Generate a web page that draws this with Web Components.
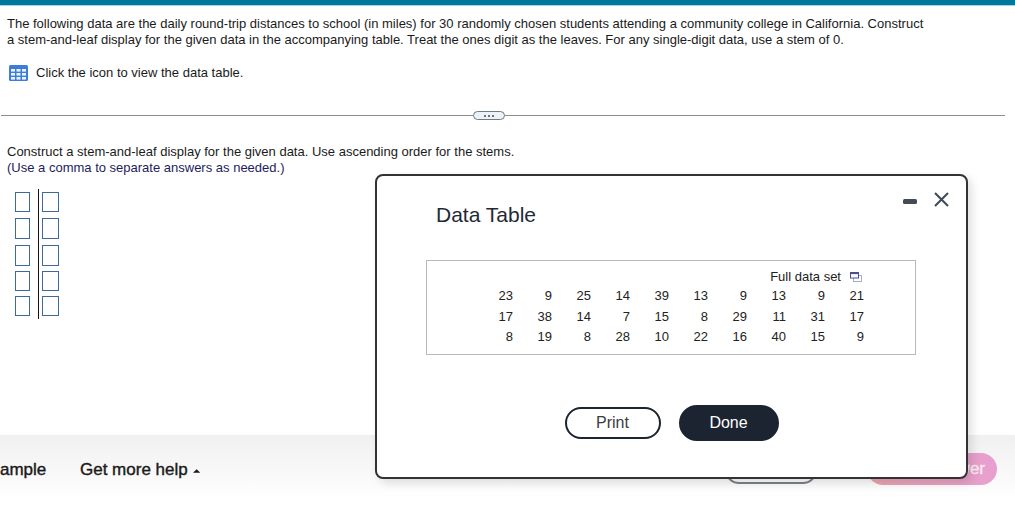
<!DOCTYPE html>
<html>
<head>
<meta charset="utf-8">
<title>Data Table</title>
<style>
  html, body { margin: 0; height: 100%; background: #fff; }
  body { font-family: "Liberation Sans", Arial, sans-serif; color: #1a1a1a; overflow: hidden; }
</style>
</head>
<body>
<hw-page>
  <hw-question></hw-question>
  <hw-divider></hw-divider>
  <hw-answer></hw-answer>
  <hw-footer></hw-footer>
  <hw-modal heading="Data Table">
    <hw-data-table></hw-data-table>
  </hw-modal>
</hw-page>

<script>
class HwPage extends HTMLElement {
  constructor() {
    super();
    this.attachShadow({ mode: "open" }).innerHTML = `
      <style>
        :host { display: flex; flex-direction: column; position: relative; height: 509px; width: 1015px; overflow: hidden; }
        .bar { height: 5px; background: #00789e; border-bottom: 1px solid #a9d4e2; flex: none; }
      </style>
      <div class="bar"></div>
      <slot></slot>`;
  }
}

class HwQuestion extends HTMLElement {
  constructor() {
    super();
    this.attachShadow({ mode: "open" }).innerHTML = `
      <style>
        :host { display: block; padding: 10px 0 0 7px; font-size: 13px; line-height: 16px; color: #1a1a1a; }
        p { margin: 0; width: 980px; }
        .link { display: flex; align-items: flex-start; gap: 8px; margin: 17px 0 0 2px; }
        svg { display: block; flex: none; }
      </style>
      <p>The following data are the daily round-trip distances to school (in miles) for 30 randomly chosen students attending a community college in California. Construct<br>a stem-and-leaf display for the given data in the accompanying table. Treat the ones digit as the leaves. For any single-digit data, use a stem of 0.</p>
      <div class="link">
        <svg width="19" height="16" viewBox="0 0 19 16">
          <rect width="19" height="16" rx="1.5" fill="#3b7dd8"/>
          <g fill="#eaf2fd">
            <rect x="2" y="4" width="4" height="2.6"/><rect x="7.5" y="4" width="4" height="2.6"/><rect x="13" y="4" width="4" height="2.6"/>
            <rect x="2" y="8" width="4" height="2.6"/><rect x="7.5" y="8" width="4" height="2.6"/><rect x="13" y="8" width="4" height="2.6"/>
            <rect x="2" y="12" width="4" height="2.6"/><rect x="7.5" y="12" width="4" height="2.6"/><rect x="13" y="12" width="4" height="2.6"/>
          </g>
        </svg>
        <span>Click the icon to view the data table.</span>
      </div>`;
  }
}

class HwDivider extends HTMLElement {
  constructor() {
    super();
    this.attachShadow({ mode: "open" }).innerHTML = `
      <style>
        :host { display: flex; align-items: center; margin: 30px 10px 0 1px; height: 9px; }
        i { flex: 1; height: 1px; background: #8d8d8d; }
        .more { width: 30px; height: 7px; border: 1px solid #6e7a86; border-radius: 5px; background: #eef2f6; display: flex; align-items: center; justify-content: center; gap: 2px; }
        .more b { width: 2px; height: 2px; background: #3f4a55; border-radius: 50%; }
      </style>
      <i style="flex:none;width:472px"></i>
      <div class="more"><b></b><b></b><b></b></div>
      <i></i>`;
  }
}

class HwAnswer extends HTMLElement {
  constructor() {
    super();
    const rows = [20, 21, 21, 20, 20];
    const gaps = [0, 6, 6, 5, 5];
    const box = (h, g) => `<u style="height:${h}px;margin-top:${g}px"></u>`;
    const col = rows.map((h, i) => box(h, gaps[i])).join("");
    this.attachShadow({ mode: "open" }).innerHTML = `
      <style>
        :host { display: block; padding: 24px 0 0 7px; font-size: 13px; line-height: 16px; }
        p { margin: 0; }
        .hint { color: #1d1d5c; }
        .stem { display: flex; margin: 13px 0 0 8px; }
        .col { display: flex; flex-direction: column; padding-top: 3px; }
        u { display: block; width: 15px; border: 1px solid #3d6a98; box-sizing: border-box; }
        .col:last-child u { width: 17px; }
        .rule { width: 1px; height: 130px; background: #111; margin: 0 3px 0 8px; }
      </style>
      <p>Construct a stem-and-leaf display for the given data. Use ascending order for the stems.</p>
      <p class="hint">(Use a comma to separate answers as needed.)</p>
      <div class="stem">
        <div class="col">${col}</div>
        <div class="rule"></div>
        <div class="col">${col}</div>
      </div>`;
  }
}

class HwFooter extends HTMLElement {
  constructor() {
    super();
    this.attachShadow({ mode: "open" }).innerHTML = `
      <style>
        :host { display: flex; align-items: flex-start; margin: auto 0 9px; height: 65px; flex: none; box-sizing: border-box; padding-top: 26px; background: linear-gradient(#f0f0f0, #fff); font-size: 17px; line-height: 18px; color: #1a1a1a; -webkit-text-stroke: .4px #1a1a1a; }
        .sim { width: 80px; flex: none; white-space: nowrap; }
        .help { display: flex; align-items: center; gap: 5px; width: 120px; flex: none; white-space: nowrap; }
        .help svg { display: block; margin-top: 2px; }
        .check { margin-left: 525px; width: 92px; height: 33px; box-sizing: border-box; border: 2px solid #7b7f8a; border-radius: 14px; margin-top: -10px; flex: none; }
        .submit { margin-left: 50px; margin-top: -8px; width: 130px; height: 32px; border-radius: 16px; flex: none; box-sizing: border-box; padding: 7px 12px 0 0; text-align: right; color: #fbe9f3; -webkit-text-stroke: .4px #fbe9f3; background: linear-gradient(90deg, #e9a3ae, #e79fd0); }
      </style>
      <span class="sim">ample</span>
      <span class="help">Get more help
        <svg width="8" height="4" viewBox="0 0 8 4"><path d="M0 4 4 0 8 4Z" fill="#1a1a1a"/></svg>
      </span>
      <span class="check"></span>
      <span class="submit">Answer</span>`;
  }
}

class HwButton extends HTMLElement {
  constructor() {
    super();
    this.attachShadow({ mode: "open" }).innerHTML = `
      <style>
        :host { display: flex; align-items: center; justify-content: center; box-sizing: border-box; width: 96px; height: 32px; border: 2px solid #1c2431; border-radius: 16px; background: #fff; color: #3c3c3c; font-size: 16px; }
        :host([primary]) { width: 100px; height: 36px; border-radius: 18px; background: #1c2431; color: #fff; }
      </style>
      <slot></slot>`;
  }
}

class HwModal extends HTMLElement {
  constructor() {
    super();
    this.attachShadow({ mode: "open" }).innerHTML = `
      <style>
        /* floats over the page */
        :host { position: absolute; left: 375px; top: 174px; width: 593px; height: 305px; box-sizing: border-box; display: block; border: 2px solid #333; border-radius: 8px; background: #fff; box-shadow: 4px 4px 10px rgba(0,0,0,.12); color: #222; }
        .head { display: flex; justify-content: space-between; padding: 16px 17px 0 59px; height: 84px; box-sizing: border-box; }
        h2 { margin: 11px 0 0; font-size: 21px; line-height: 24px; font-weight: 400; color: #1f2a36; }
        .ctl { display: flex; align-items: flex-start; gap: 17px; }
        .min { width: 14px; height: 5px; border-radius: 1.5px; background: #454b54; margin-top: 7px; }
        .body { padding: 0 50px 0 49px; }
        .foot { display: flex; justify-content: center; align-items: center; gap: 18px; padding: 50px 0 0 0; }
      </style>
      <div class="head">
        <h2></h2>
        <div class="ctl">
          <div class="min"></div>
          <svg width="15" height="15" viewBox="0 0 15 15"><path d="M1 1 14 14M14 1 1 14" stroke="#3f4a55" stroke-width="2" fill="none"/></svg>
        </div>
      </div>
      <div class="body"><slot></slot></div>
      <div class="foot">
        <hw-button>Print</hw-button>
        <hw-button primary>Done</hw-button>
      </div>`;
    this.shadowRoot.querySelector("h2").textContent = this.getAttribute("heading");
  }
}

class HwDataTable extends HTMLElement {
  constructor() {
    super();
    const data = [
      [23, 9, 25, 14, 39, 13, 9, 13, 9, 21],
      [17, 38, 14, 7, 15, 8, 29, 11, 31, 17],
      [8, 19, 8, 28, 10, 22, 16, 40, 15, 9]
    ];
    const cells = data.map(r => `<div class="row">${r.map(n => `<span>${n}</span>`).join("")}</div>`).join("");
    this.attachShadow({ mode: "open" }).innerHTML = `
      <style>
        :host { display: block; box-sizing: border-box; height: 95px; border: 1px solid #b9b9b9; padding: 8px 51px 0 0; font-size: 13px; line-height: 16px; color: #222; }
        .cap { display: flex; justify-content: flex-end; align-items: center; gap: 9px; height: 16px; margin-bottom: 3px; }
        .row { display: grid; grid-template-columns: repeat(10, 39px); justify-content: end; height: 20.5px; }
        .row span { text-align: right; }
      </style>
      <div class="cap">Full data set
        <svg width="12" height="10" viewBox="0 0 12 10" style="margin-right:2px">
          <rect x="3.5" y="3.5" width="8" height="6" fill="#fff" stroke="#a9add0"/>
          <rect x=".5" y=".5" width="8" height="5.5" fill="#fff" stroke="#4a4f9a"/>
          <rect x=".5" y=".5" width="8" height="1.6" fill="#4a4f9a"/>
        </svg>
      </div>
      ${cells}`;
  }
}

customElements.define("hw-page", HwPage);
customElements.define("hw-question", HwQuestion);
customElements.define("hw-divider", HwDivider);
customElements.define("hw-answer", HwAnswer);
customElements.define("hw-footer", HwFooter);
customElements.define("hw-button", HwButton);
customElements.define("hw-modal", HwModal);
customElements.define("hw-data-table", HwDataTable);
</script>
</body>
</html>
